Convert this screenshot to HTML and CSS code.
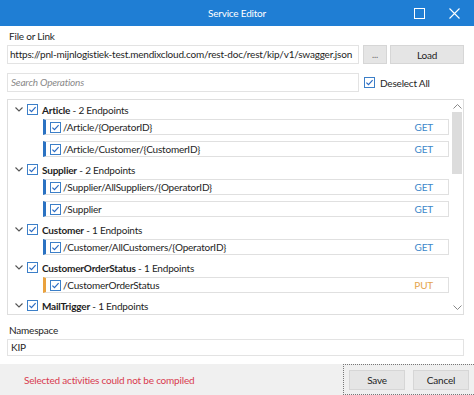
FILE: index.html
```html
<!DOCTYPE html>
<html lang="en">
<head>
    <meta charset="UTF-8">
    <meta name="viewport" content="width=device-width, initial-scale=1.0">
    <title>Service Editor</title>
    <link rel="stylesheet" href="styles.css">
</head>
<body>
    <div class="window">
        <div class="titlebar">
            <div></div>
            <div class="title">Service Editor</div>
            <div class="controls">
                <span class="maximize"></span>
                <svg class="close" width="11" height="11" viewBox="0 0 11 11">
                    <path d="M0.5 0.5 L10.5 10.5 M10.5 0.5 L0.5 10.5" stroke="#fff" stroke-width="1.1"/>
                </svg>
            </div>
        </div>

        <div class="content">
            <div class="label">File or Link</div>
            <div class="row">
                <div class="input url">https://pnl-mijnlogistiek-test.mendixcloud.com/rest-doc/rest/kip/v1/swagger.json</div>
                <button class="btn browse">...</button>
                <button class="btn load">Load</button>
            </div>

            <div class="row search-row">
                <div class="input search">Search Operations</div>
                <label class="deselect">
                    <span class="check"></span>
                    Deselect All
                </label>
            </div>

            <div class="tree">
                <div class="tree-list" id="treeList"></div>
                <div class="scrollbar">
                    <svg class="arrow" width="9" height="5" viewBox="0 0 9 5"><path d="M0.5 4.5 L4.5 0.5 L8.5 4.5" fill="none" stroke="#888" stroke-width="1"/></svg>
                    <div class="thumb"></div>
                    <div class="track"></div>
                    <svg class="arrow" width="9" height="5" viewBox="0 0 9 5"><path d="M0.5 0.5 L4.5 4.5 L8.5 0.5" fill="none" stroke="#888" stroke-width="1"/></svg>
                </div>
            </div>

            <div class="label ns-label">Namespace</div>
            <div class="input namespace">KIP</div>
        </div>

        <div class="footer">
            <div class="error">Selected activities could not be compiled</div>
            <div class="actions">
                <button class="btn">Save</button>
                <button class="btn">Cancel</button>
            </div>
        </div>
    </div>

    <script>
        // the last group is scrolled out of view, so its endpoints are not listed
        const groups = [
            { name: "Article", count: 2, endpoints: [["/Article/{OperatorID}", "GET"], ["/Article/Customer/{CustomerID}", "GET"]] },
            { name: "Supplier", count: 2, endpoints: [["/Supplier/AllSuppliers/{OperatorID}", "GET"], ["/Supplier", "GET"]] },
            { name: "Customer", count: 1, endpoints: [["/Customer/AllCustomers/{OperatorID}", "GET"]] },
            { name: "CustomerOrderStatus", count: 1, endpoints: [["/CustomerOrderStatus", "PUT"]] },
            { name: "MailTrigger", count: 1, endpoints: [] }
        ];

        const checkSvg = '<svg width="11" height="11" viewBox="0 0 11 11"><rect x="0.5" y="0.5" width="10" height="10" fill="#fff" stroke="#3c7fc8"/><path d="M2.4 5.6 L4.5 7.7 L8.6 3.2" fill="none" stroke="#2a6bc2" stroke-width="1.2"/></svg>';
        const chevron = '<svg width="8" height="5" viewBox="0 0 8 5"><path d="M0.5 0.5 L4 4 L7.5 0.5" fill="none" stroke="#555" stroke-width="1.1"/></svg>';

        const list = document.getElementById("treeList");
        document.querySelector(".deselect .check").innerHTML = checkSvg;

        groups.forEach(group => {
            const header = document.createElement("div");
            header.className = "group";
            header.innerHTML = `<span class="chevron">${chevron}</span><span class="check">${checkSvg}</span>` +
                `<span><b>${group.name}</b> - ${group.count} Endpoints</span>`;
            list.appendChild(header);

            if (group.endpoints.length === 0) return;
            const items = document.createElement("div");
            items.className = "endpoints";
            group.endpoints.forEach(([path, method]) => {
                const item = document.createElement("div");
                item.className = "endpoint " + method.toLowerCase();
                item.innerHTML = `<span class="check">${checkSvg}</span><span class="path">${path}</span><span class="method">${method}</span>`;
                items.appendChild(item);
            });
            list.appendChild(items);
        });
    </script>
</body>
</html>
```

FILE: styles.css
```css
body {
    margin: 0;
    font-family: Lato, "Noto Sans", sans-serif;
    font-size: 10px;
    letter-spacing: -0.2px;
    color: #1e1e1e;
    background-color: #fff;
}
.window {
    width: 474px;
    height: 395px;
    overflow: hidden;
    display: flex;
    flex-direction: column;
}
.titlebar {
    height: 26px;
    background-color: #1f7ed4;
    color: #fff;
    display: grid;
    grid-template-columns: 1fr auto 1fr;
    align-items: center;
}
.controls {
    display: flex;
    justify-content: flex-end;
    align-items: center;
    gap: 24px;
    padding-right: 14px;
}
.maximize {
    width: 9px;
    height: 9px;
    border: 1px solid #fff;
}
.close {
    display: block;
}
.content {
    padding: 2px 10px 0 7px;
    flex: 1;
}
.label {
    height: 17px;
    line-height: 17px;
    padding-left: 2px;
}
.row {
    display: flex;
    align-items: center;
    height: 19px;
}
.input {
    box-sizing: border-box;
    height: 19px;
    line-height: 17px;
    border: 1px solid #e3e3e3;
    padding: 0 3px;
    white-space: nowrap;
    overflow: hidden;
}
.url,
.search {
    width: 352px;
}
.url {
    padding-left: 2px;
}
.btn {
    box-sizing: border-box;
    height: 19px;
    padding: 0;
    font: inherit;
    letter-spacing: inherit;
    color: #1e1e1e;
    background-color: #e5e5e5;
    border: 1px solid #d6d6d6;
}
.browse {
    width: 24px;
    margin-left: 4px;
    font-size: 9px;
    color: #666;
}
.load {
    width: 74px;
    margin-left: 3px;
}
.search-row {
    margin-top: 9px;
}
.search {
    font-style: italic;
    color: #8a8a8a;
}
.deselect {
    display: flex;
    align-items: center;
    gap: 5px;
    margin-left: 5px;
}
.check {
    display: inline-flex;
}
.tree {
    box-sizing: border-box;
    height: 216px;
    margin-top: 7px;
    border: 1px solid #dedede;
    display: flex;
    overflow: hidden;
}
.tree-list {
    flex: 1;
    overflow: hidden;
}
.group {
    display: flex;
    align-items: center;
    height: 19px;
    gap: 4px;
    padding-left: 7px;
}
.chevron {
    display: inline-flex;
    width: 8px;
}
.endpoints {
    display: flex;
    flex-direction: column;
    gap: 6px;
    margin: 0 3px 3px 35px;
}
.endpoint {
    box-sizing: border-box;
    height: 16px;
    display: flex;
    align-items: center;
    gap: 2px;
    border: 1px solid #e0e0e0;
    border-left: 3px solid #2b72c2;
    padding: 0 15px 0 4px;
}
.path {
    flex: 1;
}
.method {
    color: #3d88ca;
}
.endpoint.put {
    border-left-color: #eaa23e;
}
.endpoint.put .method {
    color: #e5a54c;
}
.scrollbar {
    width: 10px;
    margin-right: 1px;
    display: flex;
    flex-direction: column;
    align-items: center;
    padding: 4px 0;
}
.arrow {
    display: block;
}
.thumb {
    width: 10px;
    height: 62px;
    margin-top: 3px;
    background-color: #dcdcdc;
}
.track {
    flex: 1;
}
.ns-label {
    margin-top: 7px;
}
.namespace {
    width: 457px;
    height: 17px;
    line-height: 15px;
}
.footer {
    height: 31px;
    background-color: #f0f0f0;
    display: flex;
    align-items: center;
    justify-content: space-between;
}
.error {
    padding-left: 24px;
    color: #d83b4f;
}
.actions {
    box-sizing: border-box;
    height: 31px;
    width: 131px;
    border: 1px dotted #777;
    border-right: none;
    display: flex;
    align-items: center;
    gap: 8px;
    padding-left: 5px;
}
.actions .btn {
    width: 56px;
    height: 20px;
}
```
